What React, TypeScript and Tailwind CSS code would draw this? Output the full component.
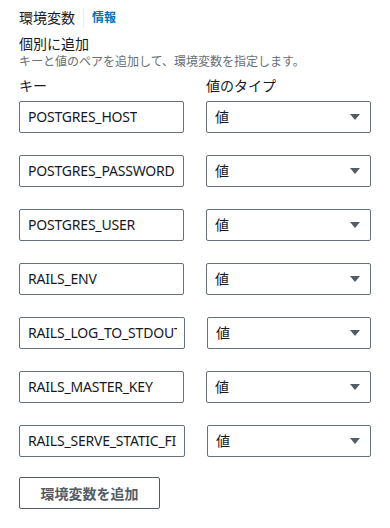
import React from "react";

const keys = [
  "POSTGRES_HOST",
  "POSTGRES_PASSWORD",
  "POSTGRES_USER",
  "RAILS_ENV",
  "RAILS_LOG_TO_STDOUT",
  "RAILS_MASTER_KEY",
  "RAILS_SERVE_STATIC_FILES",
];

const font = { fontFamily: '"Noto Sans", "Noto Sans CJK JP", sans-serif' };

export default function App() {
  return (
    <div className="w-[390px] h-[528px] bg-white px-[19px] pt-[8px] text-[#16191f]" style={font}>
      <div className="flex items-center h-[20px]">
        <span className="text-[14px] leading-[20px]">環境変数</span>
        <span className="mx-[8px] w-px h-[20px] bg-[#eaeded]" />
        <span className="text-[12px] leading-[20px] font-bold text-[#0073bb]">情報</span>
      </div>
      <div className="mt-[6px] text-[14px] leading-[20px]">個別に追加</div>
      <div className="text-[12px] leading-[16px] text-[#687078]">
        キーと値のペアを追加して、環境変数を指定します。
      </div>
      <div className="mt-[6px] flex gap-[22px] text-[14px] leading-[20px]">
        <div className="w-[166px]">キー</div>
        <div className="w-[166px]">値のタイプ</div>
      </div>
      <div className="mt-[5px] flex flex-col gap-[22px]">
        {keys.map((k) => (
          <div key={k} className="flex gap-[22px]">
            <div className="w-[166px] h-[32px] border border-[#687078] rounded-[2px] pl-[8px] pr-[7px] flex items-center">
              <div className="overflow-hidden whitespace-nowrap text-[14px] leading-[20px] tracking-[-0.2px]">{k}</div>
            </div>
            <div className="w-[166px] h-[32px] border border-[#687078] rounded-[2px] pl-[8px] pr-[10px] flex items-center justify-between">
              <span className="text-[14px] leading-[20px]">値</span>
              <svg width="10" height="6" viewBox="0 0 10 6">
                <polygon points="0,0 10,0 5,6" fill="#545b64" />
              </svg>
            </div>
          </div>
        ))}
      </div>
      <button className="mt-[20px] w-[141px] h-[32px] border border-[#545b64] rounded-[2px] text-[14px] font-bold text-[#545b64] flex items-center justify-center">
        環境変数を追加
      </button>
    </div>
  );
}
